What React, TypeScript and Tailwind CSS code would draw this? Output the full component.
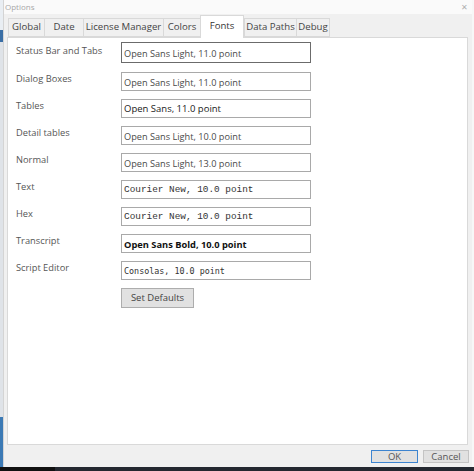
import React from "react";

const ROWS = [
  { label: "Status Bar and Tabs", value: "Open Sans Light, 11.0 point", kind: "light" },
  { label: "Dialog Boxes", value: "Open Sans Light, 11.0 point", kind: "light" },
  { label: "Tables", value: "Open Sans, 11.0 point", kind: "regular" },
  { label: "Detail tables", value: "Open Sans Light, 10.0 point", kind: "light" },
  { label: "Normal", value: "Open Sans Light, 13.0 point", kind: "light" },
  { label: "Text", value: "Courier New, 10.0 point", kind: "courier" },
  { label: "Hex", value: "Courier New, 10.0 point", kind: "courier" },
  { label: "Transcript", value: "Open Sans Bold, 10.0 point", kind: "bold" },
  { label: "Script Editor", value: "Consolas, 10.0 point", kind: "consolas" },
];

const TABS = [
  { name: "Global", w: "w-[36px]" },
  { name: "Date", w: "w-[39px]" },
  { name: "License Manager", w: "w-[80px]" },
  { name: "Colors", w: "w-[37px]" },
  { name: "Fonts", w: "w-[44px]", active: true },
  { name: "Data Paths", w: "w-[52px]" },
  { name: "Debug", w: "w-[34px]" },
];

function valueClass(kind: string) {
  if (kind === "courier") return "font-['Liberation_Mono',monospace] text-[9.4px] text-[#333]";
  if (kind === "consolas") return "font-['DejaVu_Sans_Mono',monospace] text-[8.4px] text-[#333]";
  if (kind === "bold") return "font-bold text-[9.3px] text-[#111]";
  if (kind === "regular") return "font-medium text-[9.5px] text-[#1a1a1a]";
  return "font-normal text-[9.2px] text-[#4a4a4a]";
}

export default function App() {
  return (
    <div className="w-[474px] h-[471px] flex flex-col bg-[#f0f0f0] overflow-hidden font-['Open_Sans',sans-serif]">
      <div className="flex flex-1 min-h-0">
        {/* background app peeking at the left */}
        <div className="w-[3px] flex flex-col">
          <div className="h-[30px] bg-[#e9eef3]" />
          <div className="h-[12px] bg-[#3a6ea5]" />
          <div className="flex-1 bg-[#dfe3e8]" />
          <div className="h-[50px] bg-[#3c7ab5]" />
        </div>
        <div className="w-px bg-[#d4d4d4]" />

        {/* dialog window */}
        <div className="flex-1 flex flex-col">
          <div className="h-[14px] bg-[#fafafa] flex items-center justify-between pl-[1px] pr-[4px]">
            <span className="text-[8px] leading-none text-[#a8a8a8]">Options</span>
            <span className="text-[8px] leading-none text-[#b0b0b0]">✕</span>
          </div>

          <div className="h-[23px] flex items-end pl-[4px]">
            {TABS.map((t) =>
              t.active ? (
                <div
                  key={t.name}
                  className={`${t.w} h-[23px] bg-white border border-b-0 border-[#d9d9d9] text-[9.6px] text-[#333] whitespace-nowrap flex items-start justify-center pt-[3px] -mb-px relative z-10`}
                >
                  {t.name}
                </div>
              ) : (
                <div
                  key={t.name}
                  className={`${t.w} h-[19px] bg-[#f0f0f0] border border-r-0 last:border-r border-[#d9d9d9] text-[9.6px] text-[#444] whitespace-nowrap flex items-center justify-center`}
                >
                  {t.name}
                </div>
              )
            )}
          </div>

          <div className="flex-1 ml-[3px] mr-[4px] bg-white border border-[#d9d9d9] pl-[8px] pt-[4px]">
            <div className="flex flex-col">
              {ROWS.map((r, i) => (
                <div key={r.label} className={`flex ${i === 0 ? "" : i === 1 ? "mt-[9px]" : "mt-[8px]"}`}>
                  <div className={`w-[105px] text-[9.3px] text-[#555] leading-[13px] whitespace-nowrap ${i === 0 ? "pt-[2px]" : "pt-[0px]"}`}>
                    {r.label}
                  </div>
                  <div
                    className={`w-[190px] ${
                      i === 0 ? "h-[21px] border-[#6b6b6b] border-[1.5px]" : "h-[19px] border border-[#a9a9a9]"
                    } flex items-center pl-[2px] pt-[2px] whitespace-nowrap overflow-hidden`}
                  >
                    <span className={valueClass(r.kind)}>{r.value}</span>
                  </div>
                </div>
              ))}
              <div className="flex mt-[8px]">
                <div className="w-[105px]" />
                <div className="w-[73px] h-[20px] bg-[#e1e1e1] border border-[#adadad] flex items-center justify-center text-[9.5px] text-[#444]">
                  Set Defaults
                </div>
              </div>
            </div>
          </div>

          <div className="h-[22px] flex items-start justify-end pt-[5px] pr-[3px] gap-[5px]">
            <div className="w-[47px] h-[13px] bg-[#e1e1e1] border border-[#3c84d0] flex items-center justify-center text-[9.5px] leading-none text-[#555]">
              OK
            </div>
            <div className="w-[46px] h-[13px] bg-[#e1e1e1] border border-[#c4c4c4] flex items-center justify-center text-[9.5px] leading-none text-[#555]">
              Cancel
            </div>
          </div>
        </div>
        <div className="w-[2px] bg-[#f7f7f7]" />
      </div>
      <div className="h-[4px] flex">
        <div className="w-[55px] bg-[#111]" />
        <div className="flex-1 bg-[#242830]" />
      </div>
    </div>
  );
}
